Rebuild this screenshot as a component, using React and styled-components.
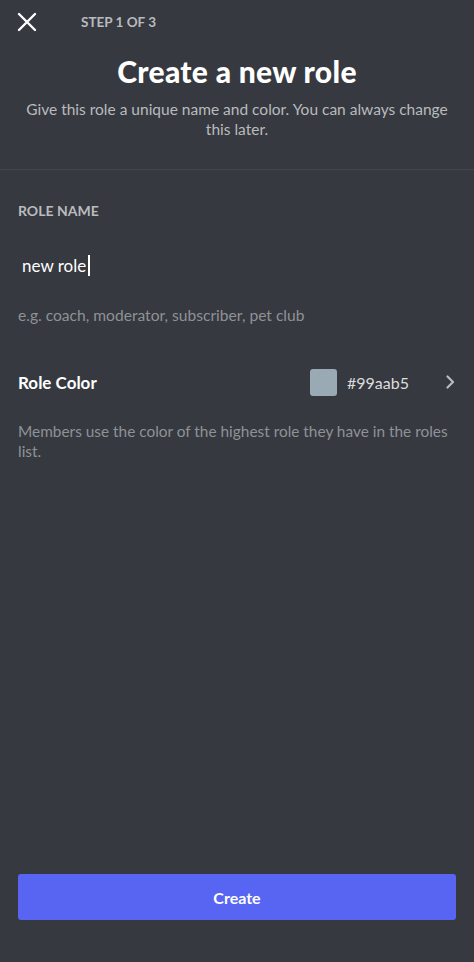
import styled, { createGlobalStyle } from 'styled-components'

const GlobalStyle = createGlobalStyle`
	html, body {
		margin: 0;
		padding: 0;
		background: #36393f;
	}
	body {
		font-family: Lato, 'Noto Sans', sans-serif;
		-webkit-font-smoothing: antialiased;
	}
`

const Screen = styled.div`
	display: flex;
	flex-direction: column;
	height: 962px;
	background: #36393f;
	color: #dcddde;
`

const TopBar = styled.div`
	display: flex;
	align-items: center;
	height: 44px;
	padding: 0 16px;
	gap: 43px;
`

const CloseButton = styled.button`
	display: inline-flex;
	align-items: center;
	justify-content: center;
	width: 22px;
	height: 22px;
	padding: 0;
	border: 0;
	background: none;
	color: #ffffff;
`

const StepLabel = styled.span`
	font-size: 13.5px;
	font-weight: 700;
	color: #b9bbbe;
`

const Header = styled.div`
	display: flex;
	flex-direction: column;
	align-items: center;
	padding: 8px 20px 30px;
	border-bottom: 1px solid #42454a;
	text-align: center;
`

const Title = styled.h1`
	margin: 0;
	font-size: 30px;
	font-weight: 900;
	letter-spacing: 0.3px;
	color: #ffffff;
	line-height: 38px;
`

const Subtitle = styled.p`
	margin: 9px 0 0;
	font-size: 15.5px;
	line-height: 20px;
	color: #b9bbbe;
`

const Section = styled.div`
	display: flex;
	flex-direction: column;
	padding: 0 18px;
`

const FieldLabel = styled.div`
	margin-top: 32px;
	font-size: 14px;
	font-weight: 700;
	color: #b9bbbe;
	line-height: 18px;
`

const NameInput = styled.div`
	display: flex;
	align-items: center;
	margin-top: 34px;
	padding-left: 4px;
	height: 22px;
	font-size: 17px;
	color: #ffffff;
`

const Caret = styled.span`
	display: inline-block;
	width: 1.5px;
	height: 21px;
	background: #ffffff;
	margin-left: 2px;
`

const Hint = styled.div`
	margin-top: 29px;
	font-size: 15.6px;
	color: #8e9297;
	line-height: 20px;
`

const ColorRow = styled.div`
	display: flex;
	align-items: center;
	justify-content: space-between;
	margin-top: 43px;
	height: 28px;
`

const RowTitle = styled.span`
	font-size: 17px;
	font-weight: 700;
	color: #ffffff;
`

const ColorValue = styled.div`
	display: flex;
	align-items: center;
	gap: 10px;
	font-size: 16px;
	color: #dcddde;
`

const Swatch = styled.span`
	width: 27px;
	height: 27px;
	border-radius: 3px;
	background: ${p => p.$color};
`

const Chevron = styled.span`
	display: inline-flex;
	margin-left: 25px;
	color: #b9bbbe;
`

const Description = styled.p`
	margin: 25px 0 0;
	font-size: 15.4px;
	line-height: 20px;
	color: #8e9297;
`

const Footer = styled.div`
	margin-top: auto;
	padding: 0 18px 42px;
`

const CreateButton = styled.button`
	width: 100%;
	height: 46px;
	border: 0;
	border-radius: 3px;
	background: #5865f2;
	color: #ffffff;
	font-family: inherit;
	font-size: 16px;
	font-weight: 700;
`

export default function App() {
	const roleColor = '#99aab5'

	return (
		<>
			<GlobalStyle />
			<Screen>
				<TopBar>
					<CloseButton aria-label="Close">
						<svg width="20" height="20" viewBox="0 0 20 20" fill="none" stroke="currentColor" strokeWidth="2.4" strokeLinecap="round">
							<path d="M2 2L18 18M18 2L2 18" />
						</svg>
					</CloseButton>
					<StepLabel>STEP 1 OF 3</StepLabel>
				</TopBar>
				<Header>
					<Title>Create a new role</Title>
					<Subtitle>Give this role a unique name and color. You can always change this later.</Subtitle>
				</Header>
				<Section>
					<FieldLabel>ROLE NAME</FieldLabel>
					<NameInput>
						new role<Caret />
					</NameInput>
					<Hint>e.g. coach, moderator, subscriber, pet club</Hint>
					<ColorRow>
						<RowTitle>Role Color</RowTitle>
						<ColorValue>
							<Swatch $color={roleColor} />
							{roleColor}
							<Chevron>
								<svg width="12" height="14" viewBox="0 0 12 14" fill="none" stroke="currentColor" strokeWidth="2.2" strokeLinecap="round" strokeLinejoin="round">
									<path d="M3.5 1.5L9 7L3.5 12.5" />
								</svg>
							</Chevron>
						</ColorValue>
					</ColorRow>
					<Description>Members use the color of the highest role they have in the roles list.</Description>
				</Section>
				<Footer>
					<CreateButton>Create</CreateButton>
				</Footer>
			</Screen>
		</>
	)
}
